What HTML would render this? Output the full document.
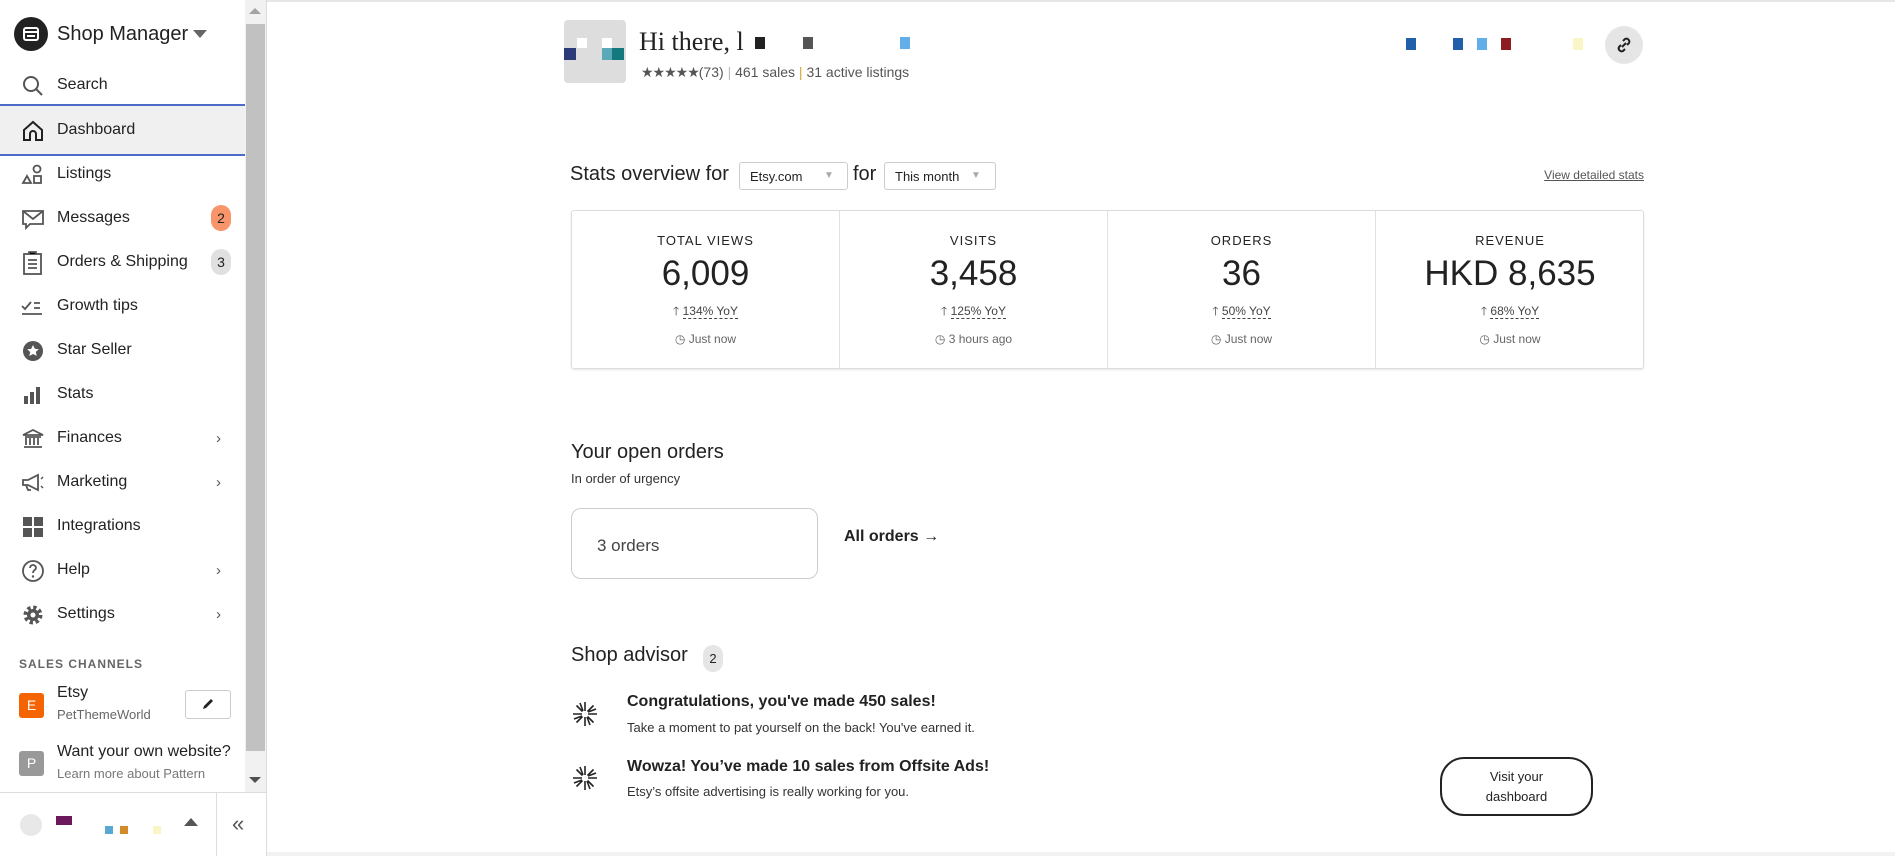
<!DOCTYPE html>
<html><head><meta charset="utf-8"><style>
*{margin:0;padding:0;box-sizing:border-box}
body{width:1895px;height:856px;overflow:hidden;background:#fff;font-family:"Liberation Sans",Arial,sans-serif;color:#222;position:relative}
.a{position:absolute;white-space:nowrap}
.nav{position:absolute;left:0;width:245px;height:44px;display:flex;align-items:center;font-size:16px;color:#222}
.nav svg{position:absolute;left:21px;top:11px}
.nav span.t{position:absolute;left:57px}
.chev{position:absolute;left:216px;color:#555;font-size:15px}
.badge{position:absolute;left:211px;width:20px;height:26px;border-radius:10px;font-size:14px;display:flex;align-items:center;justify-content:center}
.cell{position:absolute;top:0;width:268px;height:158px;text-align:center;border-right:1px solid #e1e1e1}
.cell .l{position:absolute;top:22px;width:100%;font-size:13px;letter-spacing:1px;color:#222}
.cell .n{position:absolute;top:43px;width:100%;font-size:35px;color:#222}
.cell .y{position:absolute;top:91px;width:100%;font-size:12px;color:#444}
.cell .y u{text-decoration:none;border-bottom:1px dashed #444}
.cell .j{position:absolute;top:121px;width:100%;font-size:12px;color:#666}
</style></head><body>
<div class="a" style="left:267px;top:0;width:1628px;height:2px;background:#e6e6e6"></div>
<div class="a" style="left:266px;top:0;width:1px;height:856px;background:#dcdcdc"></div>
<div class="a" style="left:245px;top:0;width:21px;height:793px;background:#f1f1f1"></div>
<div class="a" style="left:246px;top:24px;width:19px;height:727px;background:#c1c1c1"></div>
<div class="a" style="left:249px;top:8px;width:0;height:0;border-left:6px solid transparent;border-right:6px solid transparent;border-bottom:6px solid #a3a3a3"></div>
<div class="a" style="left:249px;top:777px;width:0;height:0;border-left:6px solid transparent;border-right:6px solid transparent;border-top:6px solid #505050"></div>

<div class="a" style="left:14px;top:17px;width:34px;height:34px;border-radius:50%;background:#222"></div>
<svg class="a" style="left:20px;top:23px" width="22" height="22" viewBox="0 0 22 22"><rect x="4" y="5" width="14" height="12" rx="2" fill="none" stroke="#fff" stroke-width="2"/><path d="M4 9h14M7 13h8" stroke="#fff" stroke-width="2"/></svg>
<div class="a" style="left:57px;top:23px;font-size:20px;color:#222">Shop Manager</div>
<div class="a" style="left:193px;top:30px;border-left:7px solid transparent;border-right:7px solid transparent;border-top:8px solid #666"></div>

<div class="nav" style="top:63px"><svg width="24" height="24" viewBox="0 0 24 24"><circle cx="10" cy="10" r="7" fill="none" stroke="#555" stroke-width="2"/><path d="M15 15l6 6" stroke="#555" stroke-width="2"/></svg><span class="t">Search</span></div>
<div class="a" style="left:0;top:104px;width:245px;height:52px;background:#f0f0f0;border-top:2px solid #4d6bc6;border-bottom:2px solid #4d6bc6"></div>
<div class="nav" style="top:108px"><svg width="24" height="24" viewBox="0 0 24 24"><path d="M3 11L12 3l9 8v10h-6v-6a3 3 0 00-6 0v6H3z" fill="none" stroke="#222" stroke-width="2"/></svg><span class="t">Dashboard</span></div>
<div class="nav" style="top:152px"><svg width="24" height="24" viewBox="0 0 24 24"><circle cx="16" cy="6" r="3.5" fill="none" stroke="#555" stroke-width="1.8"/><path d="M2 20l4-7 4 7z" fill="none" stroke="#555" stroke-width="1.8"/><rect x="13" y="13" width="7" height="7" fill="none" stroke="#555" stroke-width="1.8"/></svg><span class="t">Listings</span></div>
<div class="nav" style="top:196px"><svg width="24" height="24" viewBox="0 0 24 24"><path d="M2 4h20v13H9l-4 4v-4H2z" fill="none" stroke="#555" stroke-width="1.8"/><path d="M2 4l10 8 10-8" fill="none" stroke="#555" stroke-width="1.8"/></svg><span class="t">Messages</span><div class="badge" style="background:#f9956b;top:9px">2</div></div>
<div class="nav" style="top:240px"><svg width="24" height="24" viewBox="0 0 24 24"><rect x="3" y="3" width="17" height="20" fill="none" stroke="#555" stroke-width="1.8"/><path d="M8 3V1h7v2M7 9h9M7 13h9M7 17h9" stroke="#555" stroke-width="1.8"/></svg><span class="t">Orders &amp; Shipping</span><div class="badge" style="background:#e0e0e0;top:9px">3</div></div>
<div class="nav" style="top:284px"><svg width="24" height="24" viewBox="0 0 24 24"><path d="M1 11l3 3 6-7M13 8h6M13 13h6M1 19h20" fill="none" stroke="#555" stroke-width="1.8"/></svg><span class="t">Growth tips</span></div>
<div class="nav" style="top:328px"><svg width="24" height="24" viewBox="0 0 24 24"><circle cx="12" cy="12" r="10" fill="#555"/><path d="M12 6l1.8 3.8 4 .4-3 2.7.9 4L12 15l-3.7 2 .9-4-3-2.7 4-.4z" fill="#fff"/></svg><span class="t">Star Seller</span></div>
<div class="nav" style="top:372px"><svg width="24" height="24" viewBox="0 0 24 24"><path d="M3 13h4v8H3zM9 9h4v12H9zM15 4h4v17h-4z" fill="#555"/></svg><span class="t">Stats</span></div>
<div class="nav" style="top:416px"><svg width="24" height="24" viewBox="0 0 24 24"><path d="M2 8l10-5 10 5zM4 10h16M5 11v7M9 11v7M13 11v7M17 11v7M3 20h18" fill="none" stroke="#555" stroke-width="1.8"/></svg><span class="t">Finances</span><span class="chev">›</span></div>
<div class="nav" style="top:460px"><svg width="24" height="24" viewBox="0 0 24 24"><path d="M2 9h5l10-5v15L7 14H2zM5 14l2 5h3" fill="none" stroke="#555" stroke-width="1.8"/><path d="M20 8l2-2M20 15l2 2" stroke="#555" stroke-width="1.5"/></svg><span class="t">Marketing</span><span class="chev">›</span></div>
<div class="nav" style="top:504px"><svg width="24" height="24" viewBox="0 0 24 24"><path d="M2 2h9v9H2zM13 2h9v9h-9zM2 13h9v9H2zM13 13h9v9h-9z" fill="#555"/></svg><span class="t">Integrations</span></div>
<div class="nav" style="top:548px"><svg width="24" height="24" viewBox="0 0 24 24"><circle cx="12" cy="12" r="10" fill="none" stroke="#555" stroke-width="1.8"/><path d="M9 9a3 3 0 116 0c0 2-3 2-3 5" fill="none" stroke="#555" stroke-width="1.8"/><circle cx="12" cy="17.5" r="1.2" fill="#555"/></svg><span class="t">Help</span><span class="chev">›</span></div>
<div class="nav" style="top:592px"><svg width="24" height="24" viewBox="0 0 24 24"><circle cx="12" cy="12" r="7" fill="none" stroke="#555" stroke-width="5" stroke-dasharray="3 2.5"/><circle cx="12" cy="12" r="6" fill="#555"/><circle cx="12" cy="12" r="2.5" fill="#fff"/></svg><span class="t">Settings</span><span class="chev">›</span></div>

<div class="a" style="left:19px;top:657px;font-size:12px;letter-spacing:1px;color:#666;font-weight:bold">SALES CHANNELS</div>
<div class="a" style="left:19px;top:693px;width:25px;height:25px;background:#f56400;border-radius:3px;color:#fff;font-size:14px;text-align:center;line-height:25px">E</div>
<div class="a" style="left:57px;top:684px;font-size:16px">Etsy</div>
<div class="a" style="left:57px;top:707px;font-size:13px;color:#666">PetThemeWorld</div>
<div class="a" style="left:185px;top:690px;width:46px;height:29px;border:1px solid #ccc;border-radius:3px"></div>
<svg class="a" style="left:200px;top:696px" width="16" height="16" viewBox="0 0 16 16"><path d="M3 13l1-3 7-7 2 2-7 7z" fill="#222"/></svg>
<div class="a" style="left:19px;top:751px;width:25px;height:25px;background:#999;border-radius:3px;color:#fff;font-size:14px;text-align:center;line-height:25px">P</div>
<div class="a" style="left:57px;top:743px;font-size:16px">Want your own website?</div>
<div class="a" style="left:57px;top:766px;font-size:13px;color:#777">Learn more about Pattern</div>

<div class="a" style="left:0;top:792px;width:267px;height:1px;background:#ddd"></div>
<div class="a" style="left:216px;top:793px;width:1px;height:63px;background:#ddd"></div>
<div class="a" style="left:20px;top:814px;width:22px;height:22px;border-radius:50%;background:#e8e8e8"></div>
<div class="a" style="left:56px;top:816px;width:16px;height:9px;background:#6a1a5a"></div>
<div class="a" style="left:105px;top:826px;width:8px;height:8px;background:#5aa7d4"></div>
<div class="a" style="left:120px;top:826px;width:8px;height:8px;background:#d38a2a"></div>
<div class="a" style="left:153px;top:826px;width:8px;height:8px;background:#fbf6c8"></div>
<div class="a" style="left:184px;top:818px;border-left:7px solid transparent;border-right:7px solid transparent;border-bottom:8px solid #555"></div>
<div class="a" style="left:232px;top:811px;font-size:22px;color:#555">«</div>

<div class="a" style="left:564px;top:20px;width:62px;height:63px;background:#ddd;border-radius:4px"></div>
<div class="a" style="left:564px;top:48px;width:12px;height:12px;background:#2a3b78"></div>
<div class="a" style="left:577px;top:38px;width:10px;height:10px;background:#fff"></div>
<div class="a" style="left:602px;top:38px;width:10px;height:10px;background:#fff"></div>
<div class="a" style="left:602px;top:48px;width:10px;height:12px;background:#5aa8b8"></div>
<div class="a" style="left:612px;top:48px;width:12px;height:12px;background:#14787c"></div>
<div class="a" style="left:639px;top:27px;font-family:'Liberation Serif',serif;font-size:26px;color:#222">Hi there, l</div>
<div class="a" style="left:755px;top:37px;width:10px;height:12px;background:#222"></div>
<div class="a" style="left:803px;top:37px;width:10px;height:12px;background:#555"></div>
<div class="a" style="left:900px;top:37px;width:10px;height:12px;background:#62aee8"></div>
<div class="a" style="left:641px;top:64px;font-size:14px;color:#555"><span style="color:#555;letter-spacing:-1px">★★★★★</span>(73) <span style="color:#bbb">|</span> 461 sales <span style="color:#d8a43a">|</span> 31 active listings</div>
<div class="a" style="left:1406px;top:38px;width:10px;height:12px;background:#2060a8"></div>
<div class="a" style="left:1453px;top:38px;width:10px;height:12px;background:#2060a8"></div>
<div class="a" style="left:1477px;top:38px;width:10px;height:12px;background:#62aee8"></div>
<div class="a" style="left:1501px;top:38px;width:10px;height:12px;background:#8a1e22"></div>
<div class="a" style="left:1573px;top:38px;width:10px;height:12px;background:#fbf6c8"></div>
<div class="a" style="left:1605px;top:26px;width:38px;height:38px;border-radius:50%;background:#e5e5e5"></div>
<svg class="a" style="left:1614px;top:35px" width="20" height="20" viewBox="0 0 20 20"><path d="M8 12l4-4M9 6l2-2a3 3 0 014 4l-2 2M11 14l-2 2a3 3 0 01-4-4l2-2" fill="none" stroke="#222" stroke-width="2"/></svg>

<div class="a" style="left:570px;top:163px;font-size:20px;color:#222">Stats overview for</div>
<div class="a" style="left:739px;top:162px;width:109px;height:28px;border:1px solid #ccc;border-radius:3px;font-size:13px;padding:6px 0 0 10px">Etsy.com<span style="position:absolute;left:84px;top:7px;color:#aaa;font-size:10px">▼</span></div>
<div class="a" style="left:853px;top:163px;font-size:20px">for</div>
<div class="a" style="left:884px;top:162px;width:112px;height:28px;border:1px solid #ccc;border-radius:3px;font-size:13px;padding:6px 0 0 10px">This month<span style="position:absolute;left:86px;top:7px;color:#aaa;font-size:10px">▼</span></div>
<div class="a" style="left:1530px;top:168px;width:114px;text-align:right;font-size:12px;color:#555;text-decoration:underline">View detailed stats</div>

<div class="a" style="left:571px;top:210px;width:1073px;height:159px;border:1px solid #ddd;border-radius:3px;box-shadow:0 1px 2px rgba(0,0,0,.1)">
<div class="cell" style="left:0"><div class="l">TOTAL VIEWS</div><div class="n">6,009</div><div class="y">🡑 <u>134% YoY</u></div><div class="j">◷ Just now</div></div>
<div class="cell" style="left:268px"><div class="l">VISITS</div><div class="n">3,458</div><div class="y">🡑 <u>125% YoY</u></div><div class="j">◷ 3 hours ago</div></div>
<div class="cell" style="left:536px"><div class="l">ORDERS</div><div class="n">36</div><div class="y">🡑 <u>50% YoY</u></div><div class="j">◷ Just now</div></div>
<div class="cell" style="left:804px;border-right:none"><div class="l">REVENUE</div><div class="n">HKD 8,635</div><div class="y">🡑 <u>68% YoY</u></div><div class="j">◷ Just now</div></div>
</div>

<div class="a" style="left:571px;top:441px;font-size:20px">Your open orders</div>
<div class="a" style="left:571px;top:471px;font-size:13px;color:#333">In order of urgency</div>
<div class="a" style="left:571px;top:508px;width:247px;height:71px;border:1px solid #ccc;border-radius:10px;font-size:17px;color:#444;padding:27px 0 0 25px">3 orders</div>
<div class="a" style="left:844px;top:528px;font-size:16px;font-weight:bold;color:#222">All orders →</div>

<div class="a" style="left:571px;top:644px;font-size:20px">Shop advisor</div>
<div class="a" style="left:703px;top:645px;width:20px;height:27px;border-radius:10px;background:#e5e5e5;font-size:13px;text-align:center;line-height:27px">2</div>
<svg class="a" style="left:571px;top:700px" width="28" height="28" viewBox="0 0 28 28"><g stroke="#222" stroke-width="1.6"><path d="M14 2v9M14 17v9M2 14h9M17 14h9M5.5 5.5l6 6M16.5 16.5l6 6M22.5 5.5l-6 6M11.5 16.5l-6 6M9 3l3 8M16 17l3 8M3 19l8-3M17 12l8-3"/></g></svg>
<div class="a" style="left:627px;top:693px;font-size:16px;font-weight:bold">Congratulations, you've made 450 sales!</div>
<div class="a" style="left:627px;top:720px;font-size:13px;color:#333">Take a moment to pat yourself on the back! You've earned it.</div>
<svg class="a" style="left:571px;top:764px" width="28" height="28" viewBox="0 0 28 28"><g stroke="#222" stroke-width="1.6"><path d="M14 2v9M14 17v9M2 14h9M17 14h9M5.5 5.5l6 6M16.5 16.5l6 6M22.5 5.5l-6 6M11.5 16.5l-6 6M9 3l3 8M16 17l3 8M3 19l8-3M17 12l8-3"/></g></svg>
<div class="a" style="left:627px;top:758px;font-size:16px;font-weight:bold">Wowza! You’ve made 10 sales from Offsite Ads!</div>
<div class="a" style="left:627px;top:784px;font-size:13px;color:#333">Etsy’s offsite advertising is really working for you.</div>
<div class="a" style="left:1440px;top:757px;width:153px;height:59px;border:2px solid #222;border-radius:24px;font-size:13px;text-align:center;line-height:20px;padding-top:8px;white-space:normal">Visit your<br>dashboard</div>
<div class="a" style="left:267px;top:852px;width:1628px;height:4px;background:#f2f2f2"></div>
</body></html>
